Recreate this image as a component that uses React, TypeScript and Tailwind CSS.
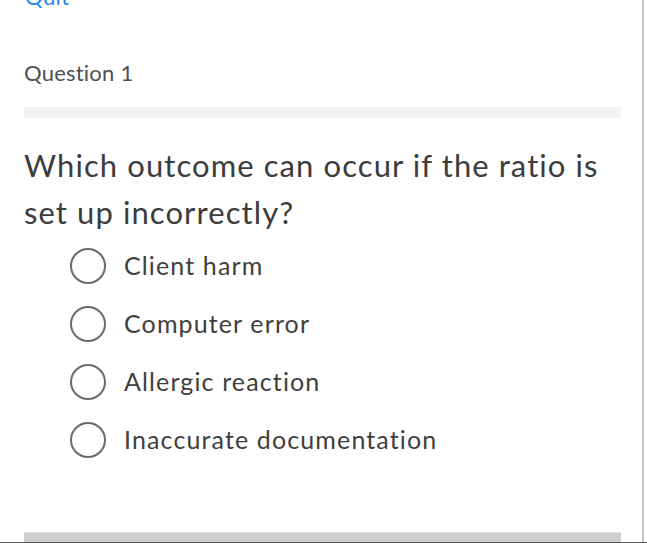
import React from 'react';

const options = ['Client harm', 'Computer error', 'Allergic reaction', 'Inaccurate documentation'];

const Radio: React.FC = () => (
  <span className="block w-[36px] h-[36px] rounded-full border-[2.5px] border-[#6b6b6b] shrink-0" />
);

export default function App() {
  return (
    <div className="w-[647px] h-[543px] bg-white overflow-hidden flex flex-col" style={{ fontFamily: 'Lato, "Open Sans", sans-serif' }}>
      <div className="flex flex-1 min-h-0">
        <div className="w-[644px] border-r-2 border-[#c4c4c4] flex flex-col pl-[24px] pr-[21px]">
          <div className="text-[22px] leading-[28px] text-[#1e88f0] -mt-[17px] pl-[1px] tracking-[0.02em]">Quit</div>

          <div className="mt-[48px] text-[22px] leading-[28px] text-[#505050] tracking-[0.01em]">Question 1</div>

          <div className="mt-[20px] h-[11px] bg-[#f3f3f3]" />

          <div className="mt-[24px] text-[31px] leading-[47px] text-[#3c3c3c] tracking-[0.035em]">
            Which outcome can occur if the ratio is set up incorrectly?
          </div>

          <ul className="mt-[12px] flex flex-col gap-[22px] pl-[46px]">
            {options.map(o => (
              <li key={o} className="flex items-center gap-[18px] h-[36px]">
                <Radio />
                <span className="text-[25px] text-[#404040] tracking-[0.045em]">{o}</span>
              </li>
            ))}
          </ul>

          <div className="mt-auto h-[10px] bg-[#cecece] border-t border-[#e2e2e2]" />
        </div>
      </div>
      <div className="h-[1px] bg-[#555555]" />
    </div>
  );
}
